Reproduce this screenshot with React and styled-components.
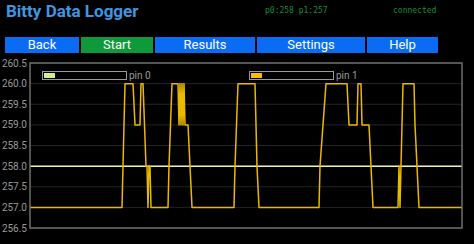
import React from 'react';
import styled, { createGlobalStyle } from 'styled-components';

const BLUE = '#0a6cf4';
const GREEN = '#0e9a3a';
const GOLD = '#eab800';
const PALE = '#eef5a8';
const AXIS = '#6e6e6e';
const GRID = '#242424';
const LABEL = '#9a9a9a';

const GlobalStyle = createGlobalStyle`
  html, body {
    margin: 0;
    padding: 0;
    background: #000;
  }
`;

const Page = styled.div`
  display: flex;
  flex-direction: column;
  width: 474px;
  height: 244px;
  background: #000;
  font-family: Roboto, "Liberation Sans", sans-serif;
  overflow: hidden;
`;

const Header = styled.header`
  display: grid;
  grid-template-columns: 265px 128px auto;
  align-items: center;
  height: 22px;
`;

const Title = styled.h1`
  margin: 0;
  padding-left: 6px;
  color: #3f96e2;
  font-size: 17px;
  font-weight: 700;
  line-height: 22px;
  white-space: nowrap;
`;

const Status = styled.span`
  color: #1c8c3c;
  font-family: "DejaVu Sans Mono", "Liberation Mono", monospace;
  font-size: 8px;
  line-height: 10px;
  white-space: nowrap;
`;

const NavBar = styled.nav`
  display: flex;
  gap: 2px;
  margin-top: 15px;
  padding-left: 5px;
`;

const NavButton = styled.button`
  width: ${(p) => p.$width}px;
  height: 16px;
  padding: 0;
  border: none;
  background: ${(p) => (p.$active ? GREEN : BLUE)};
  color: #fff;
  font-family: Roboto, "Liberation Sans", sans-serif;
  font-size: 13px;
  line-height: 16px;
`;

const ChartSvg = styled.svg`
  display: block;
  margin-top: 2px;
`;

const buttons = [
  { label: 'Back', width: 74 },
  { label: 'Start', width: 72, active: true },
  { label: 'Results', width: 100 },
  { label: 'Settings', width: 108 },
  { label: 'Help', width: 71 },
];

const X0 = 30;
const X1 = 462;
const Y_TOP = 63;
const Y_BOT = 228;
const V_MIN = 256.5;
const V_MAX = 260.5;

const yOf = (v) => Y_BOT - ((v - V_MIN) * (Y_BOT - Y_TOP)) / (V_MAX - V_MIN);

const pin1 = [
  [30, 257], [122, 257], [123, 258], [125, 260], [133, 260], [135, 259], [140, 259],
  [141, 260], [143, 260], [146, 258], [147, 258], [148, 257], [149, 258], [150, 258],
  [151, 257], [168, 257], [169, 258], [172, 260], [178, 260], [179, 259], [180, 260],
  [181, 259], [182, 260], [183, 259], [184, 260], [185, 259], [188, 259], [190, 258],
  [192, 257], [234, 257], [235, 258], [238, 260], [255, 260], [257, 258], [259, 257],
  [319, 257], [320, 258], [326, 260], [347, 260], [349, 259], [357, 259], [358, 260],
  [361, 260], [362, 259], [369, 259], [371, 258], [373, 257], [398, 257], [399, 258],
  [400, 257], [401, 258], [403, 260], [414, 260], [415, 259], [417, 258], [419, 257],
  [462, 257],
];

const ticks = [260.5, 260.0, 259.5, 259.0, 258.5, 258.0, 257.5, 257.0, 256.5];

const LegendItem = ({ x, fill, label }) => (
  <g>
    <rect x={x + 0.5} y={71.5} width={84} height={8} fill="none" stroke="#9a9a9a" strokeWidth={1} />
    <rect x={x + 2} y={73} width={11} height={5} fill={fill} />
    <text x={x + 87} y={79} fontSize="10" fill={LABEL} fontFamily="Roboto, sans-serif">
      {label}
    </text>
  </g>
);

const Chart = () => (
  <ChartSvg width="474" height="189" viewBox="0 55 474 189">
    {ticks.map((t) => (
      <g key={t}>
        <line x1={X0} x2={X1} y1={yOf(t)} y2={yOf(t)} stroke={GRID} strokeWidth={1} />
        <text
          x={27}
          y={yOf(t) + 3.5}
          textAnchor="end"
          fontSize="10"
          fill={LABEL}
          fontFamily="Roboto, sans-serif"
        >
          {t.toFixed(1)}
        </text>
      </g>
    ))}
    <line x1={X0} x2={X1} y1={yOf(258)} y2={yOf(258)} stroke={PALE} strokeWidth={1.5} />
    <polyline
      points={pin1.map(([x, v]) => `${x},${yOf(v)}`).join(' ')}
      fill="none"
      stroke={GOLD}
      strokeWidth={1.5}
      strokeLinejoin="round"
    />
    <rect
      x={X0}
      y={Y_TOP}
      width={X1 - X0}
      height={Y_BOT - Y_TOP}
      fill="none"
      stroke={AXIS}
      strokeWidth={1.5}
    />
    <LegendItem x={42} fill="#d3f08e" label="pin 0" />
    <LegendItem x={249} fill="#f4c000" label="pin 1" />
  </ChartSvg>
);

export default function App() {
  return (
    <Page>
      <GlobalStyle />
      <Header>
        <Title>Bitty Data Logger</Title>
        <Status>p0:258 p1:257</Status>
        <Status>connected</Status>
      </Header>
      <NavBar>
        {buttons.map((b) => (
          <NavButton key={b.label} $width={b.width} $active={b.active}>
            {b.label}
          </NavButton>
        ))}
      </NavBar>
      <Chart />
    </Page>
  );
}
